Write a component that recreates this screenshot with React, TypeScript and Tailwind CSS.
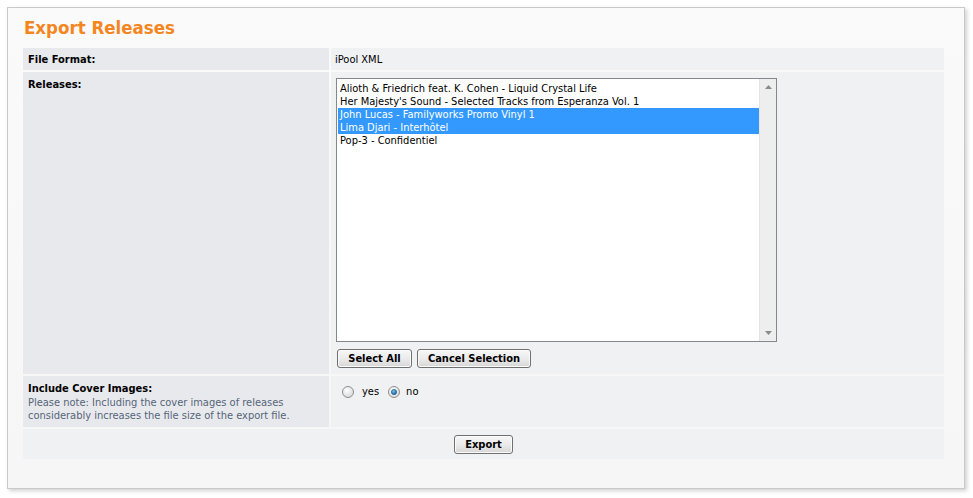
import React from "react";

const font = "font-['DejaVu_Sans_Condensed','Liberation_Sans',sans-serif]";

const releases = [
  { title: "Alioth & Friedrich feat. K. Cohen - Liquid Crystal Life", selected: false },
  { title: "Her Majesty's Sound - Selected Tracks from Esperanza Vol. 1", selected: false },
  { title: "John Lucas - Familyworks Promo Vinyl 1", selected: true },
  { title: "Lima Djari - Interhôtel", selected: true },
  { title: "Pop-3 - Confidentiel", selected: false },
];

export default function App() {
  return (
    <div className={`w-[973px] h-[498px] bg-white pt-[7px] pl-[7px] ${font}`}>
      {/* Panel */}
      <div className="w-[958px] h-[482px] border border-[#c9c9c9] bg-gradient-to-b from-[#fafafa] to-[#f6f6f6] shadow-[2px_2px_4px_rgba(0,0,0,0.18)] px-[15px] pt-[9px]">
        <h1 className="text-[18.5px] leading-[22px] font-bold text-[#f5861f] pl-[1px]">Export Releases</h1>

        <div className="mt-[9px] grid grid-cols-[306px_613px] gap-[2px] text-[11px] leading-[13px] text-black">
          {/* File format */}
          <div className="bg-[#e8e9ec] px-[5px] h-[22px] flex items-center font-bold">File Format:</div>
          <div className="bg-[#f0f1f3] px-[4px] h-[22px] flex items-center">iPool XML</div>

          {/* Releases */}
          <div className="bg-[#e8e9ec] px-[5px] pt-[6px] font-bold">Releases:</div>
          <div className="bg-[#f0f1f3] pl-[5px] pt-[6px] pb-[6px]">
            <div className="w-[441px] h-[264px] border border-[#828790] bg-white flex">
              <div className="flex-1 pt-[3px] pl-[1px]">
                {releases.map((r) => (
                  <div
                    key={r.title}
                    className={`h-[13px] pl-[2px] whitespace-nowrap ${r.selected ? "bg-[#3399ff] text-white" : ""}`}
                  >
                    {r.title}
                  </div>
                ))}
              </div>
              <div className="w-[17px] bg-[#eeeeee] border-l border-[#e4e4e4] flex flex-col justify-between items-center py-[6px]">
                <svg width="7" height="4" viewBox="0 0 7 4">
                  <path d="M0 4 L3.5 0 L7 4 Z" fill="#8a8a8a" />
                </svg>
                <svg width="7" height="4" viewBox="0 0 7 4">
                  <path d="M0 0 L7 0 L3.5 4 Z" fill="#8a8a8a" />
                </svg>
              </div>
            </div>
            <div className="flex gap-[5px] mt-[7px] ml-[1px]">
              <Btn label="Select All" w="w-[75px]" />
              <Btn label="Cancel Selection" w="w-[114px]" />
            </div>
          </div>

          {/* Cover images */}
          <div className="bg-[#e8e9ec] px-[5px] pt-[6px] pb-[5px]">
            <div className="font-bold">Include Cover Images:</div>
            <div className="text-[#56657a] mt-[1px]">
              Please note: Including the cover images of releases
              <br />
              considerably increases the file size of the export file.
            </div>
          </div>
          <div className="bg-[#f0f1f3] pl-[11px] pt-[9px] flex items-start gap-[8px]">
            <label className="flex items-center gap-[8px]">
              <Radio checked={false} />
              <span>yes</span>
            </label>
            <label className="flex items-center gap-[6px] ml-[1px]">
              <Radio checked />
              <span>no</span>
            </label>
          </div>

          {/* Export */}
          <div className="col-span-2 bg-[#f0f1f3] h-[30px] flex items-center justify-center">
            <Btn label="Export" w="w-[59px]" />
          </div>
        </div>
      </div>
    </div>
  );
}

function Btn({ label, w }: { label: string; w: string }) {
  return (
    <button
      className={`${w} h-[19px] rounded-[3px] border border-[#707070] bg-gradient-to-b from-[#f7f7f7] via-[#ebebeb] to-[#d6d6d6] shadow-[inset_0_0_0_1px_#fbfbfb] text-[11px] font-bold text-black leading-none flex items-center justify-center`}
    >
      {label}
    </button>
  );
}

function Radio({ checked }: { checked: boolean }) {
  return (
    <svg width="12" height="12" viewBox="0 0 12 12">
      <defs>
        <radialGradient id={checked ? "rc" : "ru"} cx="40%" cy="35%" r="70%">
          <stop offset="0%" stopColor="#ffffff" />
          <stop offset="100%" stopColor="#d6d6d6" />
        </radialGradient>
        <radialGradient id="dot" cx="40%" cy="35%" r="70%">
          <stop offset="0%" stopColor="#6fc6f2" />
          <stop offset="100%" stopColor="#0f5c99" />
        </radialGradient>
      </defs>
      <circle cx="6" cy="6" r="5.5" fill={`url(#${checked ? "rc" : "ru"})`} stroke="#8e8f8f" strokeWidth="1" />
      {checked && <circle cx="6" cy="6" r="2.6" fill="url(#dot)" stroke="#1f4f7a" strokeWidth="0.6" />}
    </svg>
  );
}
